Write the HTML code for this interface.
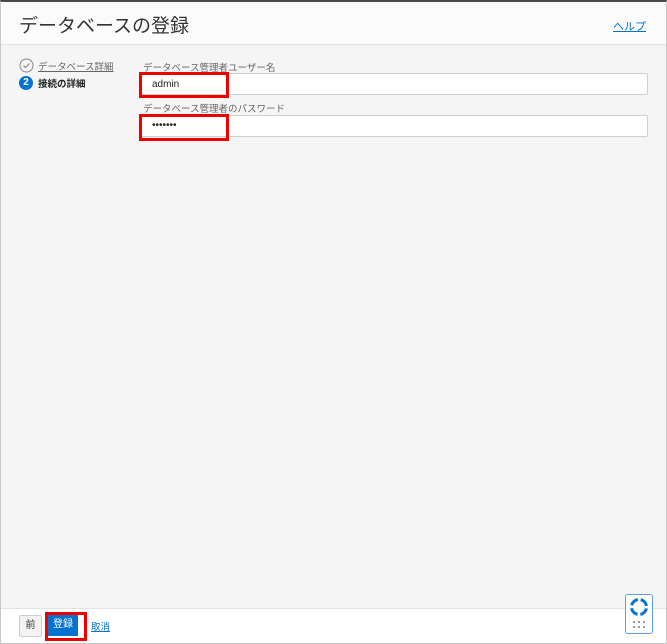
<!DOCTYPE html>
<html><head><meta charset="utf-8"><style>
*{margin:0;padding:0;box-sizing:border-box}
body{width:667px;height:644px;overflow:hidden;background:#f5f5f5;font-family:"Liberation Sans","Noto Sans CJK JP",sans-serif;position:relative}
.frame{position:absolute;left:0;top:0;width:667px;height:644px;border:1px solid #c8c8c8;border-top:2px solid #4a4a4a}
.hdr{position:absolute;left:1px;top:2px;width:665px;height:43px;background:#fbfbfb;border-bottom:1px solid #e3e3e3}
.hdr h1{position:absolute;left:18px;top:9px;font-size:19px;font-weight:normal;color:#333}
.help{position:absolute;right:20px;top:16px;font-size:11px;color:#0572ce;text-decoration:underline}
.s{position:absolute;font-size:9.5px}
.lbl{position:absolute;left:143px;font-size:9.5px;color:#666}
.inp{position:absolute;left:139px;width:509px;height:22px;background:#fff;border:1px solid #cfcfcf;border-radius:2px;font-size:10px;color:#222;padding:5px 0 0 12px}
.red{position:absolute;border:3px solid #e00;}
.ftr{position:absolute;left:1px;top:608px;width:665px;height:35px;background:#fff;border-top:1px solid #e3e3e3}
</style></head><body>
<div class="hdr"><h1>データベースの登録</h1><span class="help">ヘルプ</span></div>
<svg style="position:absolute;left:19px;top:58px" width="15" height="15"><circle cx="7.5" cy="7.5" r="6.5" fill="none" stroke="#888" stroke-width="1"/><path d="M4.5 7.5l2 2 4-4" fill="none" stroke="#888" stroke-width="1.2"/></svg>
<span class="s" style="left:38px;top:59px;color:#666;text-decoration:underline">データベース詳細</span>
<div style="position:absolute;left:19px;top:76px;width:14px;height:14px;border-radius:50%;background:#0572ce;color:#fff;font-size:10px;font-weight:bold;text-align:center;line-height:14px">2</div>
<span class="s" style="left:38px;top:76px;color:#222;font-weight:bold">接続の詳細</span>
<div class="lbl" style="top:60px">データベース管理者ユーザー名</div>
<div class="inp" style="top:73px">admin</div>
<div class="lbl" style="top:101px">データベース管理者のパスワード</div>
<div class="inp" style="top:115px;padding-top:4px">•••••••</div>
<div class="red" style="left:139px;top:72px;width:90px;height:26px"></div>
<div class="red" style="left:139px;top:114px;width:90px;height:27px"></div>
<div class="ftr"></div>
<div style="position:absolute;left:19px;top:615px;width:23px;height:22px;border:1px solid #ccc;background:#f3f3f3;font-size:10px;text-align:center;line-height:20px;color:#333;border-radius:2px">前</div>
<div style="position:absolute;left:48px;top:614px;width:30px;height:22px;background:#0572ce;font-size:10px;text-align:center;line-height:22px;color:#fff">登録</div>
<div class="red" style="left:45px;top:612px;width:42px;height:29px"></div>
<span class="s" style="left:91px;top:619px;color:#0572ce;text-decoration:underline">取消</span>
<div style="position:absolute;left:625px;top:594px;width:28px;height:40px;border:1px solid #5a9ee0;border-radius:3px;background:#fff">
<svg width="26" height="38"><circle cx="13" cy="12" r="7.5" fill="none" stroke="#0572ce" stroke-width="3"/><circle cx="13" cy="12" r="7.5" fill="none" stroke="#fff" stroke-width="3" stroke-dasharray="3 8.8" stroke-dashoffset="1.5"/><g fill="#999"><rect x="7" y="26" width="2" height="2"/><rect x="12" y="26" width="2" height="2"/><rect x="17" y="26" width="2" height="2"/><rect x="7" y="31" width="2" height="2"/><rect x="12" y="31" width="2" height="2"/><rect x="17" y="31" width="2" height="2"/></g></svg></div>
<div class="frame"></div>
</body></html>
